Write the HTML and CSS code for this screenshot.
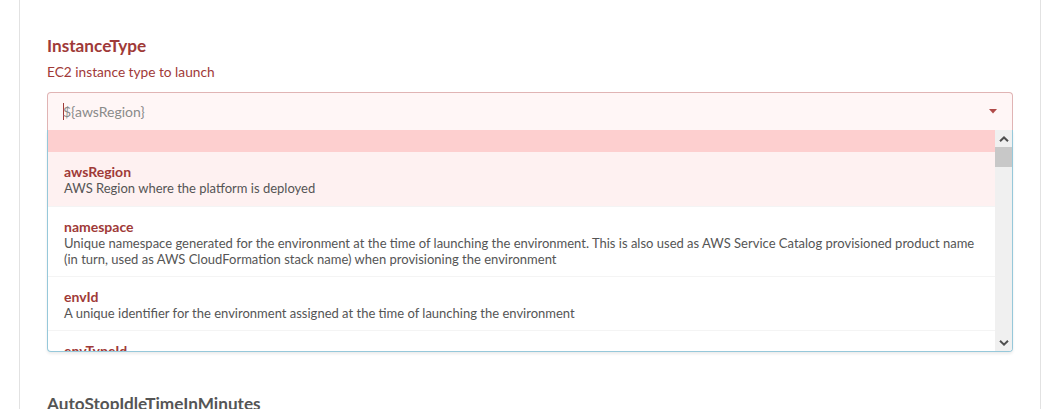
FILE: index.html
```html
<!DOCTYPE html>
<html lang="en">
<head>
<meta charset="utf-8">
<title>InstanceType</title>
<link rel="stylesheet" href="styles.css">
</head>
<body>
<div class="card">
  <div class="field error">
    <div class="label">InstanceType</div>
    <div class="desc">EC2 instance type to launch</div>
    <div class="dropdown">
      <div class="input">
        <span class="caret"></span><span class="value">${awsRegion}</span>
        <svg class="arrow" width="8" height="5" viewBox="0 0 8 5"><path d="M0 0 H8 L4 4.5 Z" fill="#b04a48"/></svg>
      </div>
      <div class="menu">
        <div class="list">
          <div class="item empty"></div>
          <div class="item active">
            <div class="name">awsRegion</div>
            <div class="text">AWS Region where the platform is deployed</div>
          </div>
          <div class="item">
            <div class="name">namespace</div>
            <div class="text">Unique namespace generated for the environment at the time of launching the environment. This is also used as AWS Service Catalog provisioned product name (in turn, used as AWS CloudFormation stack name) when provisioning the environment</div>
          </div>
          <div class="item">
            <div class="name">envId</div>
            <div class="text">A unique identifier for the environment assigned at the time of launching the environment</div>
          </div>
          <div class="item">
            <div class="name">envTypeId</div>
            <div class="text">The environment type identifier</div>
          </div>
        </div>
        <div class="scrollbar">
          <div class="sb-btn">
            <svg width="10" height="6" viewBox="0 0 10 6"><path d="M1 5.2 L5 1.4 L9 5.2" fill="none" stroke="#505050" stroke-width="2"/></svg>
          </div>
          <div class="sb-track"><div class="sb-thumb"></div></div>
          <div class="sb-btn">
            <svg width="10" height="6" viewBox="0 0 10 6"><path d="M1 0.8 L5 4.6 L9 0.8" fill="none" stroke="#505050" stroke-width="2"/></svg>
          </div>
        </div>
      </div>
    </div>
  </div>
  <div class="field">
    <div class="label plain">AutoStopIdleTimeInMinutes</div>
  </div>
</div>
</body>
</html>
```

FILE: styles.css
```css
html, body {
  margin: 0;
  padding: 0;
  background: #ffffff;
  font-family: Lato, "Helvetica Neue", Arial, sans-serif;
  overflow: hidden;
}

.card {
  margin-left: 19px;
  width: 966px;
  height: 373px;
  padding: 36px 27px 0 27px;
  border-left: 1px solid #e2e2e2;
  border-right: 1px solid #e2e2e2;
  box-sizing: content-box;
  overflow: hidden;
}

.field {
  display: flex;
  flex-direction: column;
}

.label {
  font-size: 17.2px;
  line-height: 19px;
  font-weight: 700;
  color: #9f3a38;
}

.label.plain {
  color: #555555;
  margin-top: 42px;
}

.desc {
  margin-top: 9px;
  font-size: 13.7px;
  line-height: 16px;
  color: #9f3a38;
}

.dropdown {
  margin-top: 12px;
  display: flex;
  flex-direction: column;
}

.input {
  border: 1px solid #e0b4b4;
  border-bottom: none;
  border-radius: 4px 4px 0 0;
  background: #fff6f6;
  display: flex;
  align-items: center;
  padding: 0 15px;
  font-size: 14px;
  color: #8a8a8a;
  box-sizing: border-box;
  height: 38px;
}

.caret {
  width: 1px;
  height: 17px;
  background: #9f3a38;
}

.value {
  flex: 1;
  margin-left: -1px;
}

.menu {
  height: 222px;
  box-sizing: border-box;
  display: flex;
  border: 1px solid #96c8da;
  border-top: none;
  border-radius: 0 0 4px 4px;
  box-shadow: 0 2px 3px rgba(0, 0, 0, 0.08);
  overflow: hidden;
  background: #ffffff;
}

.list {
  flex: 1;
  min-width: 0;
  overflow: hidden;
}

.item {
  padding: 12px 16px 9px;
  border-top: 1px solid #f4f4f4;
  font-size: 13px;
  line-height: 16px;
}

.item:first-child {
  border-top: none;
}

.item.empty {
  height: 22px;
  padding: 0;
  background: #fdcfcf;
  box-sizing: border-box;
}

.item.active {
  background: #fef1f1;
  border-top: none;
  padding-bottom: 10px;
}

.name {
  font-size: 14px;
  font-weight: 700;
  color: #9f3a38;
}

.text {
  color: #555555;
}

.scrollbar {
  width: 17px;
  display: flex;
  flex-direction: column;
  background: #f0f0f0;
}

.sb-btn {
  height: 17px;
  display: flex;
  align-items: center;
  justify-content: center;
}

.sb-track {
  flex: 1;
}

.sb-thumb {
  height: 20px;
  background: #c8c8c8;
}
```
